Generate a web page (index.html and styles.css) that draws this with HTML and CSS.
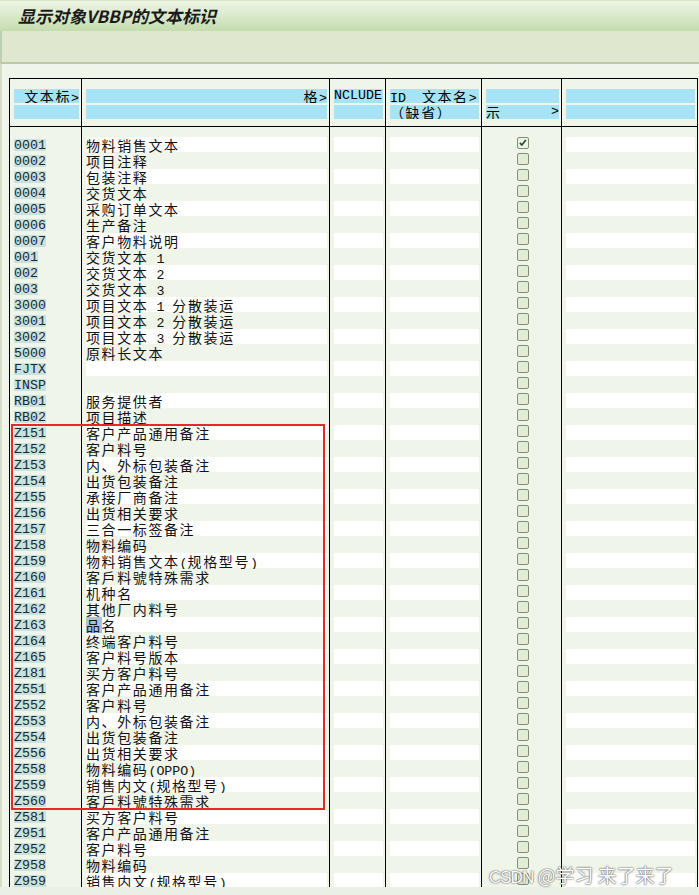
FILE: index.html
```html
<!DOCTYPE html>
<html lang="zh">
<head>
<meta charset="utf-8">
<title>显示对象VBBP的文本标识</title>
<link rel="stylesheet" href="styles.css">
</head>
<body>
<div class="titlebar"><h1 class="title">显示对象VBBP的文本标识</h1></div>
<div class="toolbar"></div>
<div class="content">
  <div class="table">
    <div class="thead">
      <div class="th"><div class="bar right c"> 文本标<span class="l">&gt;</span></div><div class="bar"></div></div>
      <div class="th"><div class="bar right c">格<span class="l">&gt;</span></div><div class="bar"></div></div>
      <div class="th"><div class="bar">NCLUDE</div><div class="bar"></div></div>
      <div class="th"><div class="bar">ID  <span class="c">文本名</span>&gt;</div><div class="bar c">（缺省）</div></div>
      <div class="th"><div class="bar"></div><div class="bar split"><span class="c">示</span><span>&gt;</span></div></div>
      <div class="th"><div class="bar"></div><div class="bar"></div></div>
    </div>
    <div class="tbody">
      <div class="td keys">
        <div class="row"><span class="key">0001</span></div>
        <div class="row"><span class="key">0002</span></div>
        <div class="row"><span class="key">0003</span></div>
        <div class="row"><span class="key">0004</span></div>
        <div class="row"><span class="key">0005</span></div>
        <div class="row"><span class="key">0006</span></div>
        <div class="row"><span class="key">0007</span></div>
        <div class="row"><span class="key">001</span></div>
        <div class="row"><span class="key">002</span></div>
        <div class="row"><span class="key">003</span></div>
        <div class="row"><span class="key">3000</span></div>
        <div class="row"><span class="key">3001</span></div>
        <div class="row"><span class="key">3002</span></div>
        <div class="row"><span class="key">5000</span></div>
        <div class="row"><span class="key">FJTX</span></div>
        <div class="row"><span class="key">INSP</span></div>
        <div class="row"><span class="key">RB01</span></div>
        <div class="row"><span class="key">RB02</span></div>
        <div class="row"><span class="key">Z151</span></div>
        <div class="row"><span class="key">Z152</span></div>
        <div class="row"><span class="key">Z153</span></div>
        <div class="row"><span class="key">Z154</span></div>
        <div class="row"><span class="key">Z155</span></div>
        <div class="row"><span class="key">Z156</span></div>
        <div class="row"><span class="key">Z157</span></div>
        <div class="row"><span class="key">Z158</span></div>
        <div class="row"><span class="key">Z159</span></div>
        <div class="row"><span class="key">Z160</span></div>
        <div class="row"><span class="key">Z161</span></div>
        <div class="row"><span class="key">Z162</span></div>
        <div class="row"><span class="key">Z163</span></div>
        <div class="row"><span class="key">Z164</span></div>
        <div class="row"><span class="key">Z165</span></div>
        <div class="row"><span class="key">Z181</span></div>
        <div class="row"><span class="key">Z551</span></div>
        <div class="row"><span class="key">Z552</span></div>
        <div class="row"><span class="key">Z553</span></div>
        <div class="row"><span class="key">Z554</span></div>
        <div class="row"><span class="key">Z556</span></div>
        <div class="row"><span class="key">Z558</span></div>
        <div class="row"><span class="key">Z559</span></div>
        <div class="row"><span class="key">Z560</span></div>
        <div class="row"><span class="key">Z581</span></div>
        <div class="row"><span class="key">Z951</span></div>
        <div class="row"><span class="key">Z952</span></div>
        <div class="row"><span class="key">Z958</span></div>
        <div class="row"><span class="key">Z959</span></div>
      </div>
      <div class="td texts">
        <div class="row">物料销售文本</div>
        <div class="row">项目注释</div>
        <div class="row">包装注释</div>
        <div class="row">交货文本</div>
        <div class="row">采购订单文本</div>
        <div class="row">生产备注</div>
        <div class="row">客户物料说明</div>
        <div class="row">交货文本<span class="l"> 1</span></div>
        <div class="row">交货文本<span class="l"> 2</span></div>
        <div class="row">交货文本<span class="l"> 3</span></div>
        <div class="row">项目文本<span class="l"> 1 </span>分散装运</div>
        <div class="row">项目文本<span class="l"> 2 </span>分散装运</div>
        <div class="row">项目文本<span class="l"> 3 </span>分散装运</div>
        <div class="row">原料长文本</div>
        <div class="row"></div>
        <div class="row"></div>
        <div class="row">服务提供者</div>
        <div class="row">项目描述</div>
        <div class="row">客户产品通用备注</div>
        <div class="row">客户料号</div>
        <div class="row">内、外标包装备注</div>
        <div class="row">出货包装备注</div>
        <div class="row">承接厂商备注</div>
        <div class="row">出货相关要求</div>
        <div class="row">三合一标签备注</div>
        <div class="row">物料编码</div>
        <div class="row">物料销售文本<span class="l">(</span>规格型号<span class="l">)</span></div>
        <div class="row">客戶料號特殊需求</div>
        <div class="row">机种名</div>
        <div class="row">其他厂内料号</div>
        <div class="row"><span class="sel">品</span>名</div>
        <div class="row">终端客户料号</div>
        <div class="row">客户料号版本</div>
        <div class="row">买方客户料号</div>
        <div class="row">客户产品通用备注</div>
        <div class="row">客户料号</div>
        <div class="row">内、外标包装备注</div>
        <div class="row">出货包装备注</div>
        <div class="row">出货相关要求</div>
        <div class="row">物料编码<span class="l">(OPPO)</span></div>
        <div class="row">销售内文<span class="l">(</span>规格型号<span class="l">)</span></div>
        <div class="row">客戶料號特殊需求</div>
        <div class="row">买方客户料号</div>
        <div class="row">客户产品通用备注</div>
        <div class="row">客户料号</div>
        <div class="row">物料编码</div>
        <div class="row">销售内文<span class="l">(</span>规格型号<span class="l">)</span></div>
      </div>
      <div class="td"><div class="stripes"></div></div>
      <div class="td"><div class="stripes"></div></div>
      <div class="td checks">
        <div class="row"><span class="cb on"><svg viewBox="0 0 12 12" width="10" height="10"><path d="M2.2 5.8 L4.6 8.4 L9.4 2.4" fill="none" stroke="#2c4a2c" stroke-width="2"/></svg></span></div>
        <div class="row"><span class="cb"></span></div>
        <div class="row"><span class="cb"></span></div>
        <div class="row"><span class="cb"></span></div>
        <div class="row"><span class="cb"></span></div>
        <div class="row"><span class="cb"></span></div>
        <div class="row"><span class="cb"></span></div>
        <div class="row"><span class="cb"></span></div>
        <div class="row"><span class="cb"></span></div>
        <div class="row"><span class="cb"></span></div>
        <div class="row"><span class="cb"></span></div>
        <div class="row"><span class="cb"></span></div>
        <div class="row"><span class="cb"></span></div>
        <div class="row"><span class="cb"></span></div>
        <div class="row"><span class="cb"></span></div>
        <div class="row"><span class="cb"></span></div>
        <div class="row"><span class="cb"></span></div>
        <div class="row"><span class="cb"></span></div>
        <div class="row"><span class="cb"></span></div>
        <div class="row"><span class="cb"></span></div>
        <div class="row"><span class="cb"></span></div>
        <div class="row"><span class="cb"></span></div>
        <div class="row"><span class="cb"></span></div>
        <div class="row"><span class="cb"></span></div>
        <div class="row"><span class="cb"></span></div>
        <div class="row"><span class="cb"></span></div>
        <div class="row"><span class="cb"></span></div>
        <div class="row"><span class="cb"></span></div>
        <div class="row"><span class="cb"></span></div>
        <div class="row"><span class="cb"></span></div>
        <div class="row"><span class="cb"></span></div>
        <div class="row"><span class="cb"></span></div>
        <div class="row"><span class="cb"></span></div>
        <div class="row"><span class="cb"></span></div>
        <div class="row"><span class="cb"></span></div>
        <div class="row"><span class="cb"></span></div>
        <div class="row"><span class="cb"></span></div>
        <div class="row"><span class="cb"></span></div>
        <div class="row"><span class="cb"></span></div>
        <div class="row"><span class="cb"></span></div>
        <div class="row"><span class="cb"></span></div>
        <div class="row"><span class="cb"></span></div>
        <div class="row"><span class="cb"></span></div>
        <div class="row"><span class="cb"></span></div>
        <div class="row"><span class="cb"></span></div>
        <div class="row"><span class="cb"></span></div>
        <div class="row"><span class="cb"></span></div>
      </div>
      <div class="td"><div class="stripes"></div></div>
    </div>
  </div>
  <div class="redbox"></div>
</div>
<div class="footer"></div>
<div class="watermark"><span class="wm-l">CSDN</span> @学习 来了来了</div>
</body>
</html>
```
FILE: styles.css
```css
html, body {
  margin: 0;
  padding: 0;
}
body {
  width: 699px;
  height: 895px;
  overflow: hidden;
  position: relative;
  background: #f0f5ea;
  font-family: "Liberation Mono", "Noto Sans CJK SC", monospace;
  font-size: 13.3px;
  color: #000;
}
.titlebar {
  height: 31px;
  box-sizing: border-box;
  display: flex;
  align-items: center;
  padding-left: 18px;
  background: linear-gradient(#eef5e6, #c5dcae);
  border-top: 1px solid #d8e6c8;
}
.title {
  margin: 0;
  font-family: "Noto Sans CJK SC", "Liberation Sans", sans-serif;
  font-size: 17px;
  font-weight: 700;
  font-style: italic;
  color: #1a1a1a;
  line-height: 20px;
}
.toolbar {
  height: 31px;
  background: #dfe8cf;
  border-bottom: 2px solid #b8caa7;
  border-left: 2px solid #bfcfb2;
}
.content {
  position: relative;
  padding: 14px 0 0 7px;
  border-left: 2px solid #d3ddc8;
}
.table {
  width: 689px;
}
.thead, .tbody {
  display: grid;
  grid-template-columns: 72px 248px 56px 96px 80px 137px;
}
.thead {
  border-top: 1px solid #000;
  border-bottom: 1px solid #000;
}
.th, .td {
  box-sizing: border-box;
  border-left: 1px solid #000;
  padding: 10px 2px 7px 4px;
  min-width: 0;
}
.th:last-child, .td:last-child {
  border-right: 1px solid #000;
}
.bar {
  height: 14px;
  line-height: 14px;
  background: #a6e3f4;
  white-space: pre;
  overflow: hidden;
}
.bar + .bar {
  margin-top: 2px;
}
.right {
  text-align: right;
}
.split {
  display: flex;
  justify-content: space-between;
}
.c {
  font-family: "Noto Sans CJK SC", sans-serif;
  font-size: 14px;
  letter-spacing: 1.6px;
}
.c .l, .l {
  font-family: "Liberation Mono", monospace;
  font-size: 13.3px;
  letter-spacing: 0;
}
.tbody {
  height: 760px;
  overflow: hidden;
}
.td {
  padding: 10px 2px 0 4px;
}
.row {
  height: 16px;
  line-height: 16px;
  white-space: pre;
  overflow: hidden;
}
.key {
  display: inline-block;
  vertical-align: top;
  margin-top: 2px;
  height: 12px;
  line-height: 13px;
  background: #c8e1e1;
  color: #1a2a2a;
}
.texts .row {
  font-family: "Noto Sans CJK SC", sans-serif;
  font-size: 14px;
  letter-spacing: 1.6px;
  color: #111;
}
.texts .row:nth-child(odd) {
  background: linear-gradient(#fff 15px, transparent 15px);
}
.sel {
  background: #a9c3de;
}
.stripes {
  height: 752px;
  background: repeating-linear-gradient(#fff 0 15px, transparent 15px 32px);
}
.checks .row {
  padding-left: 31px;
}
.cb {
  display: flex;
  align-items: center;
  justify-content: center;
  box-sizing: border-box;
  width: 12px;
  height: 12px;
  border: 1px solid #7f8f7b;
  border-radius: 2px;
  background: #e3ecd5;
}
.cb.on {
  background: #eef3e8;
}
.redbox {
  position: absolute;
  left: 9px;
  top: 360px;
  width: 314px;
  height: 386px;
  box-sizing: border-box;
  border: 2px solid #e5282b;
}
.footer {
  height: 8px;
  background: #eaf0e3;
}
.watermark {
  position: absolute;
  left: 489px;
  top: 864px;
  font-family: "Noto Sans CJK SC", "Liberation Sans", sans-serif;
  font-size: 19px;
  line-height: 22px;
  color: #fff;
  text-shadow: 0 0 1px #444, 0 0 2px #666;
  white-space: pre;
}
.wm-l {
  font-family: "Liberation Sans", sans-serif;
  font-size: 17px;
  letter-spacing: -1px;
}
```
